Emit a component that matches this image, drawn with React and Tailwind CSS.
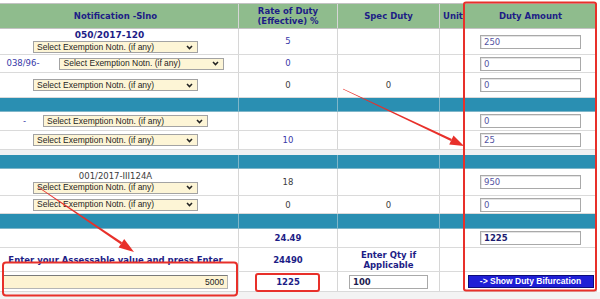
import React from "react";

const GRID = "grid grid-cols-[239px_99px_102px_25px_132px] w-[597px]";
const VERD = "font-['DejaVu_Sans',Verdana,sans-serif]";
const ARIAL = "font-['Liberation_Sans',Arial,sans-serif]";

function Row({ h, children, teal }) {
  return (
    <div
      className={`${GRID} ${h} border-b ${
        teal ? "bg-[#2a8fb2] border-[#7fb6c9]" : "bg-white border-[#dadada]"
      }`}
    >
      {children}
    </div>
  );
}

function Cell({ children, teal, first, className = "" }) {
  return (
    <div
      className={`border-r ${teal ? "border-[#7fb6c9]" : "border-[#d6d6d6]"} flex items-center justify-center ${
        first ? "flex-col pr-[7px]" : ""
      } ${className}`}
    >
      {children}
    </div>
  );
}

function TealRow({ h }) {
  return (
    <Row h={h} teal>
      <Cell teal />
      <Cell teal />
      <Cell teal />
      <Cell teal />
      <Cell teal />
    </Row>
  );
}

// dropdown look-alike, drawn as a box so the text sits where the screenshot has it
function Exemption() {
  return (
    <div
      role="combobox"
      className={`${ARIAL} flex items-center justify-between shrink-0 w-[165px] h-[12px] border border-[#a3a3a3] bg-[#fdf5d6] text-[8.5px] leading-none text-[#1e1e1e] pl-[3px] pr-[4px] whitespace-nowrap`}
    >
      <span>Select Exemption Notn. (if any)</span>
      <svg width="7" height="5" viewBox="0 0 7 5">
        <path d="M1 1l2.5 2.6L6 1" stroke="#222" strokeWidth="1.5" fill="none" />
      </svg>
    </div>
  );
}

function Amount({ value, bold }) {
  return (
    <input
      readOnly
      defaultValue={value}
      className={`${VERD} w-[101px] h-[14px] border border-[#a9a9a9] shadow-[inset_1px_1px_0_#e4e4e4] bg-white pl-[3px] text-[8.5px] leading-none outline-none ${
        bold ? "font-bold text-[#1c1c70]" : "text-[#5454a2]"
      }`}
    />
  );
}

const Blue = ({ children }) => (
  <span className={`${VERD} text-[8.5px] text-[#3838a8] whitespace-nowrap`}>{children}</span>
);
const Grey = ({ children }) => (
  <span className={`${VERD} text-[8.5px] text-[#3c3c3c] leading-[10px]`}>{children}</span>
);
const Navy = ({ children, className = "" }) => (
  <span className={`${VERD} font-bold text-[8.5px] text-[#1d1d86] leading-[10px] ${className}`}>
    {children}
  </span>
);

export default function App() {
  return (
    <div className="relative w-[600px] h-[299px] overflow-hidden bg-white">
      <div className="h-[3px] bg-white" />

      {/* Header */}
      <div className={`${GRID} h-[26px] bg-[#8fbc8d] border-t border-b border-[#c3c3c3]`}>
        <Cell first>
          <Navy>Notification -Slno</Navy>
        </Cell>
        <Cell className="flex-col">
          <Navy>Rate of Duty</Navy>
          <Navy>(Effective) %</Navy>
        </Cell>
        <Cell>
          <Navy>Spec Duty</Navy>
        </Cell>
        <Cell className="justify-start! pl-[3px] overflow-hidden">
          <Navy className="whitespace-nowrap">Unit</Navy>
        </Cell>
        <Cell>
          <Navy>Duty Amount</Navy>
        </Cell>
      </div>

      {/* 050/2017-120 */}
      <Row h="h-[26px]">
        <Cell first>
          <Navy className="text-[9px] mr-[12px]">050/2017-120</Navy>
          <div className="mt-[1px]">
            <Exemption />
          </div>
        </Cell>
        <Cell>
          <Blue>5</Blue>
        </Cell>
        <Cell />
        <Cell />
        <Cell>
          <Amount value="250" />
        </Cell>
      </Row>

      <Row h="h-[18px]">
        <Cell first className="flex-row! gap-[20px]">
          <Blue>038/96-</Blue>
          <Exemption />
        </Cell>
        <Cell>
          <Blue>0</Blue>
        </Cell>
        <Cell />
        <Cell />
        <Cell>
          <Amount value="0" />
        </Cell>
      </Row>

      <Row h="h-[25px]">
        <Cell first>
          <Exemption />
        </Cell>
        <Cell>
          <Grey>0</Grey>
        </Cell>
        <Cell>
          <Grey>0</Grey>
        </Cell>
        <Cell />
        <Cell>
          <Amount value="0" />
        </Cell>
      </Row>

      <TealRow h="h-[14px]" />

      <Row h="h-[19px]">
        <Cell first className="flex-row! gap-[17px]">
          <Blue>-</Blue>
          <Exemption />
        </Cell>
        <Cell />
        <Cell />
        <Cell />
        <Cell>
          <Amount value="0" />
        </Cell>
      </Row>

      <Row h="h-[19px]">
        <Cell first>
          <Exemption />
        </Cell>
        <Cell>
          <Blue>10</Blue>
        </Cell>
        <Cell />
        <Cell />
        <Cell>
          <Amount value="25" />
        </Cell>
      </Row>

      <div className="h-[5px] w-[597px] bg-[#eef1f3]" />

      <TealRow h="h-[14px]" />

      {/* 001/2017-III124A */}
      <Row h="h-[27px]">
        <Cell first>
          <Grey>001/2017-III124A</Grey>
          <div className="mt-[1px]">
            <Exemption />
          </div>
        </Cell>
        <Cell>
          <Grey>18</Grey>
        </Cell>
        <Cell />
        <Cell />
        <Cell>
          <Amount value="950" />
        </Cell>
      </Row>

      <Row h="h-[18px]">
        <Cell first>
          <Exemption />
        </Cell>
        <Cell>
          <Grey>0</Grey>
        </Cell>
        <Cell>
          <Grey>0</Grey>
        </Cell>
        <Cell />
        <Cell>
          <Amount value="0" />
        </Cell>
      </Row>

      <TealRow h="h-[15px]" />

      {/* Totals */}
      <Row h="h-[19px]">
        <Cell first />
        <Cell>
          <Navy>24.49</Navy>
        </Cell>
        <Cell />
        <Cell />
        <Cell>
          <Amount value="1225" bold />
        </Cell>
      </Row>

      <Row h="h-[24px]">
        <Cell first>
          <Navy className="whitespace-nowrap">Enter your Assessable value and press Enter</Navy>
        </Cell>
        <Cell>
          <Navy>24490</Navy>
        </Cell>
        <Cell className="flex-col">
          <Navy>Enter Qty if</Navy>
          <Navy>Applicable</Navy>
        </Cell>
        <Cell />
        <Cell />
      </Row>

      <Row h="h-[20px]">
        <Cell first>
          <input
            readOnly
            defaultValue="5000"
            className={`${ARIAL} w-[225px] h-[14px] border border-[#7a7a7a] border-b-[#b5b5b5] border-r-[#b5b5b5] bg-[#fdf3d2] text-right pr-[3px] text-[8.5px] text-[#222] outline-none`}
          />
        </Cell>
        <Cell>
          <Navy>1225</Navy>
        </Cell>
        <Cell>
          <input
            readOnly
            defaultValue="100"
            className={`${VERD} w-[79px] h-[14px] border border-[#a9a9a9] bg-white pl-[3px] text-[8.5px] font-bold text-[#1c1c50] outline-none`}
          />
        </Cell>
        <Cell />
        <Cell>
          <button
            className={`${ARIAL} w-[126px] h-[13px] bg-[#1f1fd6] border border-[#0c0c7a] text-white font-bold text-[8.5px] leading-none`}
          >
            -&gt; Show Duty Bifurcation
          </button>
        </Cell>
      </Row>

      <div className="h-[7px] bg-[#f3f3f3]" />

      {/* annotations */}
      <svg className="absolute left-0 top-0 pointer-events-none" width="600" height="299">
        <g fill="none" stroke="#e8302a" strokeWidth="2">
          <rect x="464" y="2.5" width="132" height="288" rx="2" />
          <rect x="3" y="262.5" width="234" height="33" rx="3" />
          <rect x="256" y="274" width="63" height="17" rx="2" />
        </g>
        <g fill="#e8302a">
          <polygon points="38.2,186.7 37.8,187.3 120.7,244.2 122.1,242.2" />
          <polygon points="134,252 118.6,247.4 124.2,239" />
          <polygon points="343.1,88.7 342.9,89.3 450.8,141.1 451.9,139" />
          <polygon points="464,146 449.2,144.6 453.5,135.5" />
        </g>
      </svg>
    </div>
  );
}
